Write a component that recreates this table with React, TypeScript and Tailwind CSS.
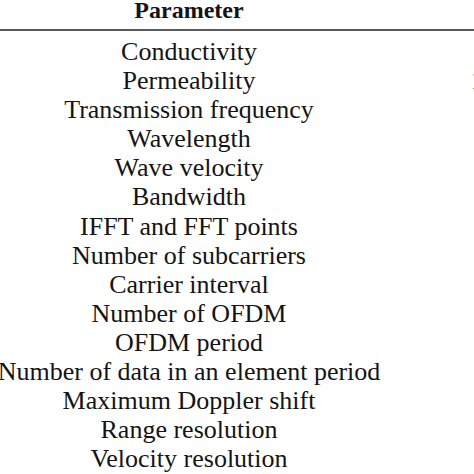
const rows: { name: string; value?: string }[] = [
  { name: 'Conductivity' },
  { name: 'Permeability', value: '1' },
  { name: 'Transmission frequency' },
  { name: 'Wavelength' },
  { name: 'Wave velocity' },
  { name: 'Bandwidth' },
  { name: 'IFFT and FFT points' },
  { name: 'Number of subcarriers' },
  { name: 'Carrier interval' },
  { name: 'Number of OFDM' },
  { name: 'OFDM period' },
  { name: 'Number of data in an element period' },
  { name: 'Maximum Doppler shift' },
  { name: 'Range resolution' },
  { name: 'Velocity resolution' },
];

export default function App() {
  return (
    <div className="h-[474px] w-[474px] overflow-hidden bg-white text-[#141414] font-['Liberation_Serif',serif]">
      <div className="flex h-[29px]">
        <div className="w-[378px] shrink-0 text-center text-[24px] font-bold leading-[21px]">
          Parameter
        </div>
      </div>
      <div className="h-[2px] w-full bg-[#5a5a5a]" />
      <div className="pt-[6px]">
        {rows.map((row) => (
          <div key={row.name} className="flex text-[26px] leading-[29.1px] whitespace-nowrap">
            <div className="flex w-[378px] shrink-0 justify-center">
              <span>{row.name}</span>
            </div>
            {row.value && <div className="pl-[93px]">{row.value}</div>}
          </div>
        ))}
      </div>
    </div>
  );
}
